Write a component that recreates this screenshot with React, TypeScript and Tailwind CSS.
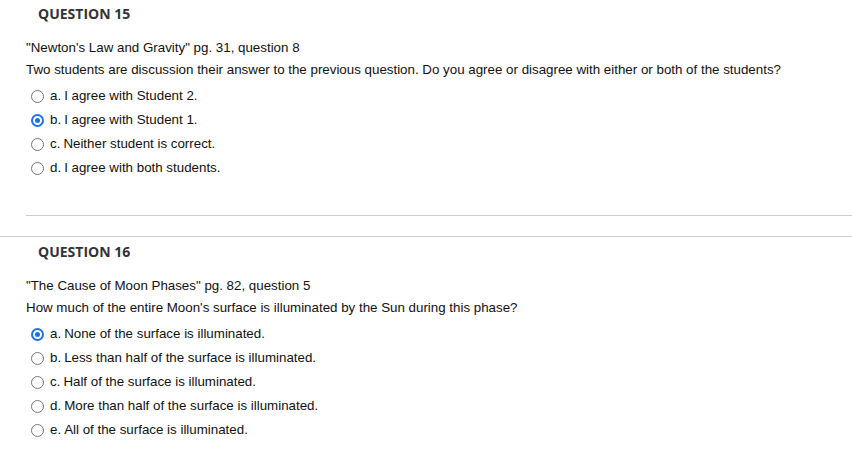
import React from "react";

type Q = {
  num: number;
  title: string;
  prompt: string;
  options: { label: string; text: string; checked?: boolean }[];
  pt: string;
};

function Radio({ checked }: { checked?: boolean }) {
  if (checked) {
    return (
      <span className="block w-[13px] h-[13px] rounded-full border-[2px] border-[#1a73e8] bg-white flex items-center justify-center shrink-0">
        <span className="block w-[5px] h-[5px] rounded-full bg-[#1a73e8]" />
      </span>
    );
  }
  return <span className="block w-[13px] h-[13px] rounded-full border border-[#767676] bg-white shrink-0" />;
}

function Question({ q }: { q: Q }) {
  return (
    <div className={q.pt}>
      <div className="pl-[38px] text-[14px] leading-[20px] font-bold text-[#333] font-['Open_Sans',sans-serif]">
        QUESTION {q.num}
      </div>
      <div className="mt-[13px] pl-[26px] text-[13.33px] leading-[22px] text-[#111]">
        <div>{q.title}</div>
        <div>{q.prompt}</div>
      </div>
      <div className="mt-[3px] pl-[31px] text-[13.33px] text-[#111]">
        {q.options.map((o) => (
          <div key={o.label} className="flex items-center h-[24px]">
            <span className="flex mt-[1px] shrink-0">
              <Radio checked={o.checked} />
            </span>
            <span className="ml-[6px] leading-[24px]">{o.label}</span>
            <span className="ml-[3px] leading-[24px]">{o.text}</span>
          </div>
        ))}
      </div>
    </div>
  );
}

const q15: Q = {
  num: 15,
  title: "\"Newton's Law and Gravity\" pg. 31, question 8",
  prompt:
    "Two students are discussion their answer to the previous question. Do you agree or disagree with either or both of the students?",
  options: [
    { label: "a.", text: "I agree with Student 2." },
    { label: "b.", text: "I agree with Student 1.", checked: true },
    { label: "c.", text: "Neither student is correct." },
    { label: "d.", text: "I agree with both students." },
  ],
  pt: "pt-[4px]",
};

const q16: Q = {
  num: 16,
  title: "\"The Cause of Moon Phases\" pg. 82, question 5",
  prompt: "How much of the entire Moon's surface is illuminated by the Sun during this phase?",
  options: [
    { label: "a.", text: "None of the surface is illuminated.", checked: true },
    { label: "b.", text: "Less than half of the surface is illuminated." },
    { label: "c.", text: "Half of the surface is illuminated." },
    { label: "d.", text: "More than half of the surface is illuminated." },
    { label: "e.", text: "All of the surface is illuminated." },
  ],
  pt: "pt-[5px]",
};

export default function App() {
  return (
    <div className="w-[852px] h-[450px] overflow-hidden bg-white font-['Liberation_Sans',Arial,sans-serif]">
      <Question q={q15} />
      <div className="mt-[35px] ml-[26px] border-t border-[#cccccc]" />
      <div className="mt-[20px] border-t border-[#cccccc]" />
      <Question q={q16} />
    </div>
  );
}
